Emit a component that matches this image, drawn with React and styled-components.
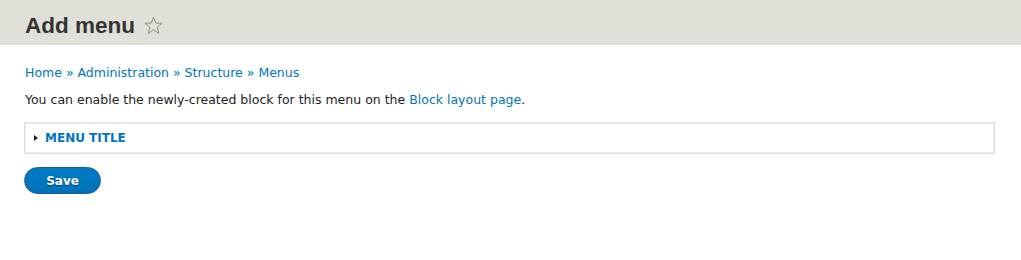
import React from 'react'
import styled, { createGlobalStyle } from 'styled-components'

const GlobalStyle = createGlobalStyle`
  body {
    margin: 0;
    background: #fff;
    font-family: "DejaVu Sans", "Liberation Sans", sans-serif;
    color: #333;
  }
`

const Header = styled.header`
  background: #e0e0d8;
  height: 45px;
  box-sizing: border-box;
  display: flex;
  align-items: center;
  padding: 6px 25px 0;
`

const Title = styled.h1`
  margin: 0;
  font-family: "Liberation Sans", "DejaVu Sans", sans-serif;
  font-size: 22.5px;
  font-weight: 700;
  color: #333;
  display: flex;
  align-items: center;
  gap: 8px;
`

const Star = styled.svg`
  width: 21px;
  height: 21px;
`

const Content = styled.main`
  padding: 19px 24px 0 25px;
  font-size: 12.5px;
`

const Breadcrumb = styled.nav`
  color: #0074bd;
  line-height: 18px;
  margin-bottom: 9px;
`

const Link = styled.a`
  color: #0074bd;
  text-decoration: none;
`

const Message = styled.p`
  margin: 0 0 13px;
  line-height: 18px;
  color: #222;
`

const Details = styled.div`
  border: 1px solid #ddd;
  box-shadow: inset 0 0 0 1px #eee;
  height: 30px;
  display: flex;
  align-items: center;
  padding-left: 9px;
  margin-right: 2px;
  margin-left: -1px;
  gap: 7px;
`

const Triangle = styled.span`
  width: 0;
  height: 0;
  border-top: 3.5px solid transparent;
  border-bottom: 3.5px solid transparent;
  border-left: 4px solid #222;
`

const Summary = styled.span`
  color: #0074bd;
  font-weight: 700;
  text-transform: uppercase;
  font-size: 12px;
`

const SaveButton = styled.button`
  margin-top: 13px;
  margin-left: -1px;
  font-family: inherit;
  font-size: 12px;
  font-weight: 700;
  color: #fff;
  width: 77px;
  height: 27px;
  border-radius: 20em;
  border: 1px solid #1e5c90;
  background: linear-gradient(to bottom, #007bc6, #0071b8);
  text-shadow: 0 1px rgba(0, 0, 0, 0.5);
  cursor: pointer;
`

export default function App() {
  return (
    <>
      <GlobalStyle />
      <Header>
        <Title>
          Add menu
          <Star viewBox="0 0 24 24" fill="none" stroke="#8d8d7f" strokeWidth="1.1" strokeLinejoin="miter">
            <path d="M12 2.5l2.6 6.6 7 .4-5.4 4.5 1.8 6.9L12 17l-6 3.9 1.8-6.9-5.4-4.5 7-.4z" />
          </Star>
        </Title>
      </Header>
      <Content>
        <Breadcrumb>
          <Link href="#">Home</Link> » <Link href="#">Administration</Link> »{' '}
          <Link href="#">Structure</Link> » <Link href="#">Menus</Link>
        </Breadcrumb>
        <Message>
          You can enable the newly-created block for this menu on the{' '}
          <Link href="#">Block layout page</Link>.
        </Message>
        <Details>
          <Triangle />
          <Summary>Menu title</Summary>
        </Details>
        <SaveButton>Save</SaveButton>
      </Content>
    </>
  )
}
